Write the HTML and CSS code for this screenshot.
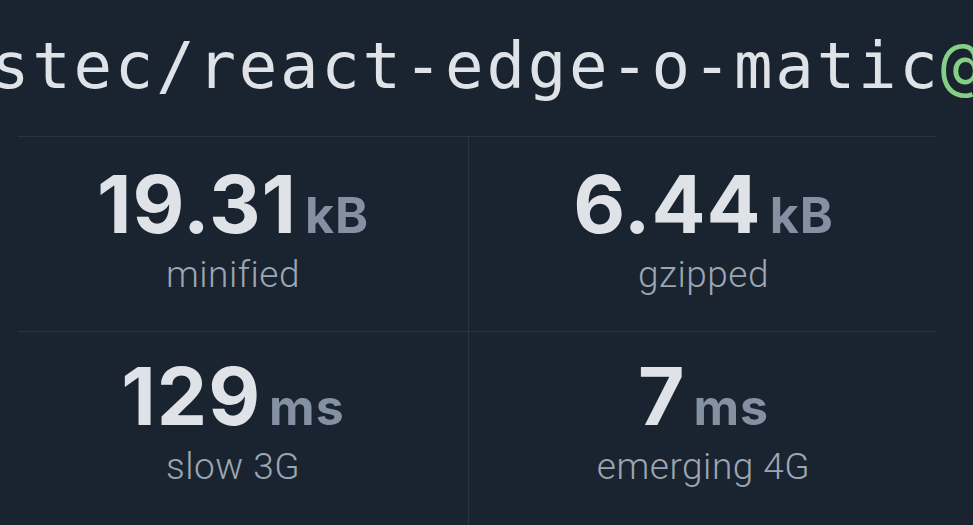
FILE: index.html
```html
<!DOCTYPE html>
<html>
<head>
<meta charset="utf-8">
<link rel="stylesheet" href="styles.css">
</head>
<body>
<div class="page">
  <h1 class="title"><span class="name">stec/react-edge-o-matic</span><span class="at">@</span></h1>
  <div class="stats">
    <div class="rule"></div>
    <div class="row">
      <div class="cell">
        <div class="value"><span class="num">19.31</span><span class="unit">kB</span></div>
        <div class="label">minified</div>
      </div>
      <div class="cell cell-right">
        <div class="value"><span class="num">6.44</span><span class="unit">kB</span></div>
        <div class="label">gzipped</div>
      </div>
    </div>
    <div class="rule"></div>
    <div class="row row-second">
      <div class="cell">
        <div class="value"><span class="num">129</span><span class="unit">ms</span></div>
        <div class="label">slow 3G</div>
      </div>
      <div class="cell cell-right">
        <div class="value"><span class="num">7</span><span class="unit">ms</span></div>
        <div class="label">emerging 4G</div>
      </div>
    </div>
  </div>
</div>
</body>
</html>
```
FILE: styles.css
```css
html, body {
  margin: 0;
  padding: 0;
  background: #1a2330;
  overflow: hidden;
  height: 100%;
}
.page {
  width: 973px;
  height: 525px;
  overflow: hidden;
}
.title {
  margin: 0 0 0 -9px;
  height: 136px;
  box-sizing: border-box;
  padding-top: 26px;
  white-space: nowrap;
  font-family: "DejaVu Sans Mono", monospace;
  font-weight: normal;
  font-size: 64px;
  letter-spacing: 2.75px;
  line-height: 80px;
  color: #dfe2e6;
}
.at {
  color: #86cf86;
}
.stats {
  margin-left: -2px;
  width: 940px;
}
.rule {
  height: 1px;
  margin: 0 2px 0 20px;
  background: #2a3441;
}
.row {
  display: grid;
  grid-template-columns: 470px 470px;
  height: 194px;
}
.cell {
  display: flex;
  flex-direction: column;
  align-items: center;
  padding-top: 27px;
}
.row-second .cell {
  padding-top: 24px;
}
.cell-right {
  border-left: 1px solid #2a3441;
}
.value {
  display: flex;
  align-items: baseline;
  font-family: Inter, "Noto Sans", sans-serif;
  font-weight: 700;
  line-height: 80px;
}
.num {
  font-size: 80px;
  color: #dfe2e6;
  letter-spacing: 1px;
}
.unit {
  font-size: 50px;
  letter-spacing: 1px;
  color: #8391a3;
  margin-left: 8px;
}
.label {
  font-family: Roboto, "Noto Sans", sans-serif;
  font-weight: 300;
  font-size: 37px;
  line-height: 44px;
  letter-spacing: 0.5px;
  color: #9ca6b2;
  margin-top: -2px;
}
```
